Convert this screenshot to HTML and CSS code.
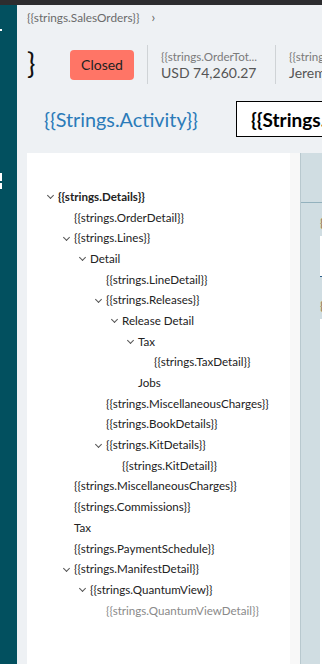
FILE: index.html
```html
<!DOCTYPE html>
<html>
<head>
<meta charset="utf-8">
<link rel="stylesheet" href="styles.css">
</head>
<body>
<div class="topbar"></div>
<div class="app">
  <div class="sidebar">
    <span class="side-mark m1"></span>
    <span class="side-mark m2"></span>
    <span class="side-mark m3"></span>
  </div>
  <div class="main">
    <div class="breadcrumb"><span class="crumb">{{strings.SalesOrders}}</span><span class="crumb-sep">&rsaquo;</span></div>
    <div class="header">
      <div class="title">}</div>
      <div class="badge">Closed</div>
      <div class="hdr-item">
        <div class="hdr-label">{{strings.OrderTot...</div>
        <div class="hdr-value">USD 74,260.27</div>
      </div>
      <div class="hdr-item">
        <div class="hdr-label">{{strings.Customer}}</div>
        <div class="hdr-value">Jeremy Smith</div>
      </div>
    </div>
    <div class="tabs">
      <div class="tab">{{Strings.Activity}}</div>
      <div class="tab tab-active">{{Strings.Details}}</div>
    </div>
    <div class="content">
      <div class="tree-panel">
        <ul class="tree">
          <li class="row l0 bold"><span class="chev"></span>{{strings.Details}}</li>
          <li class="row l1"><span class="nochev"></span>{{strings.OrderDetail}}</li>
          <li class="row l1"><span class="chev"></span>{{strings.Lines}}</li>
          <li class="row l2"><span class="chev"></span>Detail</li>
          <li class="row l3"><span class="nochev"></span>{{strings.LineDetail}}</li>
          <li class="row l3"><span class="chev"></span>{{strings.Releases}}</li>
          <li class="row l4"><span class="chev"></span>Release Detail</li>
          <li class="row l5"><span class="chev"></span>Tax</li>
          <li class="row l6"><span class="nochev"></span>{{strings.TaxDetail}}</li>
          <li class="row l5"><span class="nochev"></span>Jobs</li>
          <li class="row l3"><span class="nochev"></span>{{strings.MiscellaneousCharges}}</li>
          <li class="row l3"><span class="nochev"></span>{{strings.BookDetails}}</li>
          <li class="row l3"><span class="chev"></span>{{strings.KitDetails}}</li>
          <li class="row l4"><span class="nochev"></span>{{strings.KitDetail}}</li>
          <li class="row l1"><span class="nochev"></span>{{strings.MiscellaneousCharges}}</li>
          <li class="row l1"><span class="nochev"></span>{{strings.Commissions}}</li>
          <li class="row l1"><span class="nochev"></span>Tax</li>
          <li class="row l1"><span class="nochev"></span>{{strings.PaymentSchedule}}</li>
          <li class="row l1"><span class="chev"></span>{{strings.ManifestDetail}}</li>
          <li class="row l2"><span class="chev"></span>{{strings.QuantumView}}</li>
          <li class="row l3 muted"><span class="nochev"></span>{{strings.QuantumViewDetail}}</li>
        </ul>
      </div>
      <div class="strip"></div>
      <div class="side-panel">
        <div class="side-head"></div>
        <div class="side-body">
          <span class="side-glyph">{</span>
          <div class="side-box"></div>
          <div class="side-rule"></div>
          <span class="side-glyph g2">{</span>
          <div class="side-box b2"></div>
        </div>
      </div>
    </div>
  </div>
</div>
</body>
</html>
```
FILE: styles.css
```css
* { box-sizing: border-box; }
html, body { margin: 0; padding: 0; }
body {
  width: 322px;
  height: 664px;
  overflow: hidden;
  font-family: "Lato", "Open Sans", sans-serif;
  background: #eef1f4;
  color: #222;
}
.topbar { height: 5px; background: #2d2d2f; }
.app { display: flex; height: 659px; }
.sidebar {
  width: 17px;
  flex: none;
  background: #02505f;
  position: relative;
}
.side-mark { position: absolute; left: 0; background: #fff; width: 2px; }
.side-mark.m1 { top: 24px; height: 2px; }
.side-mark.m2 { top: 168px; height: 8px; }
.side-mark.m3 { top: 178px; height: 6px; }
.main { flex: 1; min-width: 0; padding-left: 10px; overflow: hidden; }
.breadcrumb {
  display: flex;
  align-items: center;
  gap: 12px;
  height: 14px;
  margin-top: 5px;
  font-size: 11.8px;
  color: #6b6b6b;
}
.crumb-sep { font-size: 13px; color: #666; }
.header {
  display: flex;
  align-items: center;
  height: 39px;
  margin-top: 21px;
  white-space: nowrap;
}
.title { font-size: 28px; line-height: 28px; color: #111; width: 43px; flex: none; padding-bottom: 3px; }
.badge {
  flex: none;
  width: 64px;
  height: 30px;
  background: #ff7566;
  border-radius: 4px;
  font-size: 14px;
  color: #222;
  display: flex;
  align-items: center;
  justify-content: center;
  margin-right: 13px;
}
.hdr-item {
  flex: none;
  height: 39px;
  border-left: 1px solid #cfd3d6;
  padding-left: 13px;
  padding-top: 5px;
  width: 128px;
  overflow: hidden;
}
.hdr-label { font-size: 11.6px; color: #7a7a7a; line-height: 14px; }
.hdr-value { font-size: 14px; color: #555; line-height: 18px; }
.tabs {
  display: flex;
  align-items: center;
  height: 36px;
  margin-top: 17px;
  white-space: nowrap;
}
.tab {
  font-size: 19.8px;
  color: #2b7bb9;
  padding-left: 17px;
  width: 209px;
  flex: none;
}
.tab-active {
  color: #000;
  font-weight: 700;
  font-size: 19px;
  background: #fff;
  border: 1.5px solid #000;
  height: 36px;
  padding-left: 14px;
  display: flex;
  align-items: center;
  width: 120px;
}
.content { display: flex; margin-top: 16px; height: 520px; }
.tree-panel { width: 263px; flex: none; background: #fff; padding-top: 33px; }
.tree { list-style: none; margin: 0; padding: 0; }
.row {
  display: flex;
  align-items: center;
  height: 20.7px;
  font-size: 11.6px;
  color: #222;
  white-space: nowrap;
}
.row.bold { font-weight: 700; }
.row.muted { color: #8a8a8a; }
.l0 { padding-left: 20px; }
.l1 { padding-left: 36px; }
.l2 { padding-left: 52px; }
.l3 { padding-left: 68px; }
.l4 { padding-left: 84px; }
.l5 { padding-left: 100px; }
.l6 { padding-left: 116px; }
.chev, .nochev { width: 11px; flex: none; height: 10px; position: relative; }
.chev::before {
  content: "";
  position: absolute;
  left: 1px;
  top: 2px;
  width: 4px;
  height: 4px;
  border-right: 1px solid #555;
  border-bottom: 1px solid #555;
  transform: rotate(45deg);
}
.strip { width: 10px; flex: none; background: #f8f8f8; }
.side-panel { flex: 1; background: #d0dde2; border-left: 1px solid #b8c8ce; }
.side-head { height: 50px; border-bottom: 1px solid #93b1bd; }
.side-body { padding-left: 19px; position: relative; }
.side-glyph { display: block; font-size: 12px; color: #9a7a3c; margin-top: 13px; line-height: 14px; }
.side-box { height: 40px; background: #fff; margin-top: 6px; }
.side-rule { height: 1px; background: #2b5f8a; }
.side-glyph.g2 { margin-top: 22px; }
.side-box.b2 { height: 400px; }
```
